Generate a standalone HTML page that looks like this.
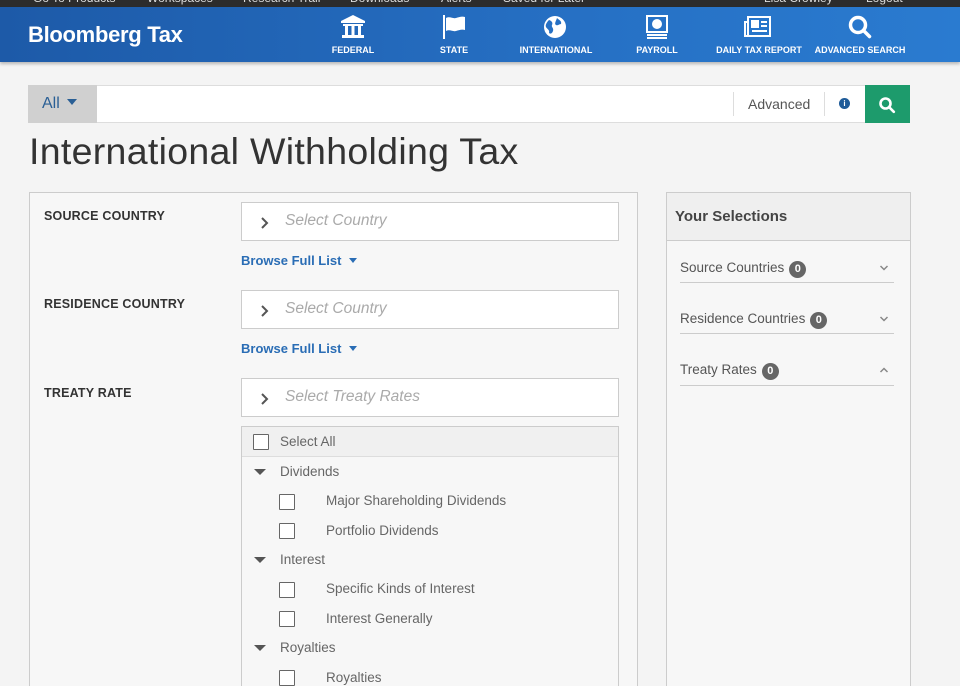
<!DOCTYPE html>
<html><head><meta charset="utf-8"><style>
*{box-sizing:border-box;margin:0;padding:0}
html,body{width:960px;height:686px;overflow:hidden}
body{background:#f4f4f4;font-family:"Liberation Sans",sans-serif;position:relative;color:#333}
.a{position:absolute}
.top{left:0;top:0;width:960px;height:7px;background:#2c2c2c;overflow:hidden}
.top span{position:absolute;top:-9px;color:#ddd;font-size:12px}
.hdr{left:0;top:7px;width:960px;height:55px;background:linear-gradient(90deg,#1d5aa8,#2670c4 60%,#2a7bd0);box-shadow:0 2px 3px rgba(0,0,0,.25)}
.logo{left:28px;top:22px;color:#fff;font-size:22px;font-weight:bold;letter-spacing:-.3px}
.nav{color:#fff;font-size:9px;font-weight:bold;text-align:center;top:45px;transform:translateX(-50%);white-space:nowrap}
.ic{transform:translateX(-50%);top:14px}
.lbl{font-size:12.5px;font-weight:bold;color:#333;left:44px;letter-spacing:.2px}
.inp{left:241px;width:378px;height:39px;background:#fff;border:1px solid #ccc}
.inp span{position:absolute;left:43px;top:9px;font-style:italic;color:#aaa;font-size:15.5px}
.inp svg{position:absolute;left:18px;top:13px}
.br{left:241px;color:#2a6db5;font-size:13px;font-weight:bold}
.br i{display:inline-block;width:0;height:0;border-left:4px solid transparent;border-right:4px solid transparent;border-top:5px solid #2a6db5;margin-left:8px;vertical-align:2px}
.cb{width:16px;height:16px;border:1.5px solid #666;background:#fff;border-radius:1px}
.tx{font-size:13.5px;color:#666}
.tri{width:0;height:0;border-left:6px solid transparent;border-right:6px solid transparent;border-top:6px solid #555}
.sel{left:680px;font-size:13.5px;color:#555}
.bad{display:inline-block;width:17px;height:17px;border-radius:50%;background:#666;color:#fff;font-size:11px;text-align:center;line-height:17px;font-weight:bold;margin-left:5px;vertical-align:0}
.ln{left:680px;width:214px;height:1px;background:#ccc}
.chev{left:879px}
</style></head><body>
<div class="a top"><span style="left:33px">Go To Products</span><span style="left:147px">Workspaces</span><span style="left:243px">Research Trail</span><span style="left:350px">Downloads</span><span style="left:441px">Alerts</span><span style="left:503px">Saved for Later</span><span style="left:764px">Lisa Crowley</span><span style="left:866px">Logout</span></div>
<div class="a hdr"></div>
<div class="a logo">Bloomberg Tax</div>
<svg class="a ic" style="left:353px" width="26" height="26" viewBox="0 0 26 26" fill="#fff"><path d="M13 1L1 7v2h24V7z"/><rect x="3" y="10" width="20" height="2"/><rect x="5" y="12" width="3" height="9"/><rect x="11.5" y="12" width="3" height="9"/><rect x="18" y="12" width="3" height="9"/><rect x="2" y="21" width="22" height="3"/></svg>
<svg class="a ic" style="left:454px" width="26" height="26" viewBox="0 0 26 26" fill="#fff"><rect x="2" y="1" width="2" height="24"/><path d="M5 4c4-2 7 1 10 0s6-2 9-1v13c-3-1-6 0-9 1s-6-2-10 0z"/></svg>
<svg class="a ic" style="left:555px" width="26" height="26" viewBox="0 0 26 26"><circle cx="13" cy="13" r="11" fill="#fff"/><path d="M7 6c3 1 4 3 3 5s2 3 1 6-3 3-4 2c1-3-2-4-3-6s1-5 3-7zM15 4c2 2 5 3 4 6-2 0-3 2-5 1s0-4 1-7z" fill="#2670c4"/></svg>
<svg class="a ic" style="left:657px" width="26" height="26" viewBox="0 0 26 26" fill="none" stroke="#fff" stroke-width="2"><rect x="3" y="2" width="20" height="16"/><circle cx="13" cy="10" r="4" fill="#fff"/><path d="M3 21h20M3 24h20"/></svg>
<svg class="a ic" style="left:758px" width="30" height="26" viewBox="0 0 30 26" fill="none" stroke="#fff" stroke-width="2"><rect x="5" y="3" width="22" height="19"/><path d="M5 8H2v14h3"/><rect x="9" y="7" width="6" height="6" fill="#fff"/><path d="M18 8h6M18 12h6M9 17h15"/></svg>
<svg class="a ic" style="left:860px" width="26" height="26" viewBox="0 0 26 26" fill="none" stroke="#fff" stroke-width="3.5"><circle cx="11" cy="11" r="7.5"/><path d="M16.5 16.5l6 6" stroke-linecap="round"/></svg>
<div class="a nav" style="left:353px">FEDERAL</div>
<div class="a nav" style="left:454px">STATE</div>
<div class="a nav" style="left:556px">INTERNATIONAL</div>
<div class="a nav" style="left:657px">PAYROLL</div>
<div class="a nav" style="left:759px">DAILY TAX REPORT</div>
<div class="a nav" style="left:860px">ADVANCED SEARCH</div>
<div class="a" style="left:28px;top:85px;width:882px;height:38px;background:#fff;border:1px solid #ddd"></div>
<div class="a" style="left:28px;top:85px;width:69px;height:38px;background:#d0d0d0;color:#2a5f95;font-size:16px;padding:10px 0 0 14px">All <span style="display:inline-block;border-left:5px solid transparent;border-right:5px solid transparent;border-top:6px solid #2a5f95;vertical-align:3px;margin-left:3px"></span></div>
<div class="a" style="left:733px;top:92px;width:1px;height:24px;background:#ddd"></div>
<div class="a" style="left:748px;top:96px;font-size:14px;color:#555">Advanced</div>
<div class="a" style="left:824px;top:92px;width:1px;height:24px;background:#ddd"></div>
<div class="a" style="left:839px;top:98px;width:11px;height:11px;border-radius:50%;background:#1f5c99;color:#fff;font-size:8px;font-weight:bold;text-align:center;line-height:11px">i</div>
<div class="a" style="left:865px;top:85px;width:45px;height:38px;background:#1d9b6c"></div>
<svg class="a" style="left:878px;top:96px" width="18" height="18" viewBox="0 0 18 18" fill="none" stroke="#fff" stroke-width="2.6"><circle cx="7.5" cy="7.5" r="5"/><path d="M11.3 11.3l4.5 4.5" stroke-linecap="round"/></svg>
<div class="a" style="left:29px;top:130px;font-size:37.5px;color:#333;letter-spacing:.3px">International Withholding Tax</div>
<div class="a" style="left:29px;top:192px;width:609px;height:520px;border:1px solid #ccc;background:#f7f7f7"></div>
<div class="a lbl" style="top:209px">SOURCE COUNTRY</div>
<div class="a lbl" style="top:297px">RESIDENCE COUNTRY</div>
<div class="a lbl" style="top:386px">TREATY RATE</div>
<div class="a inp" style="top:202px"><svg width="10" height="14" viewBox="0 0 10 14"><path d="M2 2l5 5-5 5" fill="none" stroke="#555" stroke-width="2"/></svg><span>Select Country</span></div>
<div class="a br" style="top:253px">Browse Full List<i></i></div>
<div class="a inp" style="top:290px"><svg width="10" height="14" viewBox="0 0 10 14"><path d="M2 2l5 5-5 5" fill="none" stroke="#555" stroke-width="2"/></svg><span>Select Country</span></div>
<div class="a br" style="top:341px">Browse Full List<i></i></div>
<div class="a inp" style="top:378px"><svg width="10" height="14" viewBox="0 0 10 14"><path d="M2 2l5 5-5 5" fill="none" stroke="#555" stroke-width="2"/></svg><span>Select Treaty Rates</span></div>
<div class="a" style="left:241px;top:426px;width:378px;height:290px;border:1px solid #ccc;background:#f7f7f7"></div>
<div class="a" style="left:242px;top:427px;width:376px;height:30px;background:#f0f0f0;border-bottom:1px solid #ddd"></div>
<div class="a cb" style="left:253px;top:434px"></div><div class="a tx" style="left:280px;top:434px">Select All</div>
<div class="a tri" style="left:254px;top:469px"></div><div class="a tx" style="left:280px;top:464px">Dividends</div>
<div class="a cb" style="left:279px;top:494px"></div><div class="a tx" style="left:326px;top:493px">Major Shareholding Dividends</div>
<div class="a cb" style="left:279px;top:523px"></div><div class="a tx" style="left:326px;top:523px">Portfolio Dividends</div>
<div class="a tri" style="left:254px;top:557px"></div><div class="a tx" style="left:280px;top:552px">Interest</div>
<div class="a cb" style="left:279px;top:582px"></div><div class="a tx" style="left:326px;top:581px">Specific Kinds of Interest</div>
<div class="a cb" style="left:279px;top:611px"></div><div class="a tx" style="left:326px;top:611px">Interest Generally</div>
<div class="a tri" style="left:254px;top:645px"></div><div class="a tx" style="left:280px;top:640px">Royalties</div>
<div class="a cb" style="left:279px;top:670px"></div><div class="a tx" style="left:326px;top:670px">Royalties</div>
<div class="a" style="left:666px;top:192px;width:245px;height:520px;border:1px solid #ccc;background:#f7f7f7"></div>
<div class="a" style="left:667px;top:193px;width:243px;height:48px;background:#efefef;border-bottom:1px solid #ccc"></div>
<div class="a" style="left:675px;top:208px;font-size:15px;font-weight:bold;color:#444">Your Selections</div>
<div class="a sel" style="top:260px">Source Countries<span class="bad">0</span></div>
<svg class="a chev" style="top:265px" width="10" height="6" viewBox="0 0 10 6"><path d="M1.5 1l3.5 3.5L8.5 1" fill="none" stroke="#888" stroke-width="1.5"/></svg>
<div class="a ln" style="top:282px"></div>
<div class="a sel" style="top:311px">Residence Countries<span class="bad">0</span></div>
<svg class="a chev" style="top:316px" width="10" height="6" viewBox="0 0 10 6"><path d="M1.5 1l3.5 3.5L8.5 1" fill="none" stroke="#888" stroke-width="1.5"/></svg>
<div class="a ln" style="top:333px"></div>
<div class="a sel" style="top:362px">Treaty Rates<span class="bad">0</span></div>
<svg class="a chev" style="top:367px" width="10" height="6" viewBox="0 0 10 6"><path d="M1.5 5L5 1.5 8.5 5" fill="none" stroke="#888" stroke-width="1.5"/></svg>
<div class="a ln" style="top:385px"></div>
</body></html>
